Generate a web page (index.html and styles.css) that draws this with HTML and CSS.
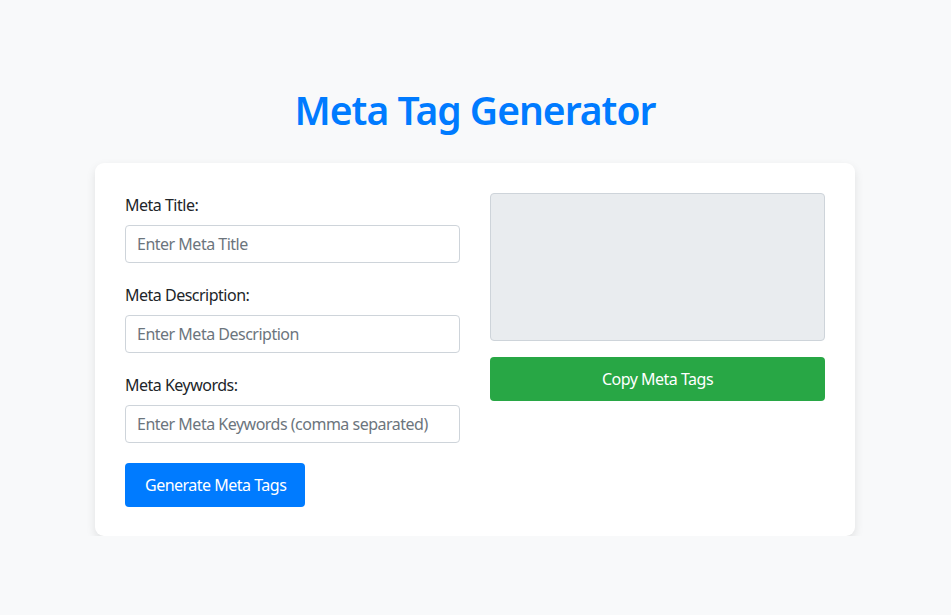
FILE: index.html
```html
<!DOCTYPE html>
<html lang="en">
<head>
<meta charset="utf-8">
<title>Meta Tag Generator</title>
<link rel="stylesheet" href="styles.css">
</head>
<body>
<div class="page">
  <h1 class="title">Meta Tag Generator</h1>
  <div class="card">
    <div class="col">
      <label class="label" for="t">Meta Title:</label>
      <input class="input" id="t" type="text" placeholder="Enter Meta Title">
      <label class="label" for="d">Meta Description:</label>
      <input class="input" id="d" type="text" placeholder="Enter Meta Description">
      <label class="label" for="k">Meta Keywords:</label>
      <input class="input" id="k" type="text" placeholder="Enter Meta Keywords (comma separated)">
      <div><button class="btn btn-primary">Generate Meta Tags</button></div>
    </div>
    <div class="col">
      <textarea class="output" readonly></textarea>
      <button class="btn btn-success btn-block">Copy Meta Tags</button>
    </div>
  </div>
</div>
</body>
</html>
```
FILE: styles.css
```css
* { box-sizing: border-box; }
html, body { margin: 0; padding: 0; }
body {
  background: #f8f9fa;
  font-family: "Noto Sans", "Open Sans", sans-serif;
  color: #212529;
  font-size: 16px;
  line-height: 24px;
  letter-spacing: -0.5px;
}
.page {
  width: 761px;
  margin: 0 auto;
  padding-top: 86px;
}
.title {
  margin: 0 0 29px;
  text-align: center;
  color: #007bff;
  font-size: 39px;
  line-height: 48px;
  font-weight: 600;
  letter-spacing: -1px;
  width: 760px;
}
.card {
  width: 760px;
  background: #fff;
  border-radius: 9px;
  box-shadow: 0 4px 10px rgba(0,0,0,0.1);
  padding: 30px 30px 29px;
  display: grid;
  grid-template-columns: 1fr 1fr;
  column-gap: 30px;
  align-items: start;
}
.col { display: flex; flex-direction: column; }
.label { display: block; margin-bottom: 8px; }
.input {
  display: block;
  width: 100%;
  height: 38px;
  padding: 6px 11px;
  font: inherit;
  letter-spacing: inherit;
  color: #495057;
  background: #fff;
  border: 1px solid #ced4da;
  border-radius: 4px;
  margin-bottom: 20px;
}
.input::placeholder { color: #6c757d; }
.output {
  display: block;
  width: 100%;
  height: 148px;
  background: #e9ecef;
  border: 1px solid #ced4da;
  border-radius: 4px;
  resize: none;
  font: inherit;
  padding: 6px 12px;
}
.btn {
  font: inherit;
  letter-spacing: inherit;
  white-space: nowrap;
  color: #fff;
  border: none;
  border-radius: 4px;
  height: 44px;
  padding: 0 20px;
  cursor: pointer;
}
.btn-primary { background: #007bff; width: 180px; }
.btn-success { background: #28a745; }
.btn-block { width: 100%; margin-top: 16px; }
```
